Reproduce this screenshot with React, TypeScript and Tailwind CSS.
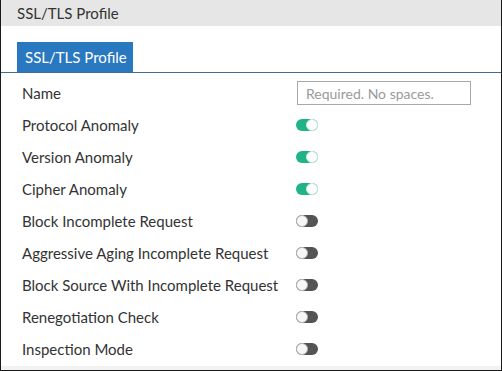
import React from "react";

const rows: { label: string; on: boolean }[] = [
  { label: "Protocol Anomaly", on: true },
  { label: "Version Anomaly", on: true },
  { label: "Cipher Anomaly", on: true },
  { label: "Block Incomplete Request", on: false },
  { label: "Aggressive Aging Incomplete Request", on: false },
  { label: "Block Source With Incomplete Request", on: false },
  { label: "Renegotiation Check", on: false },
  { label: "Inspection Mode", on: false },
];

function Toggle({ on }: { on: boolean }) {
  return on ? (
    <div className="relative w-[22px] h-[12px] rounded-full bg-[#1fb386]">
      <div className="absolute right-0 top-0 w-[12px] h-[12px] rounded-full bg-white border border-[#cfe9e0]" />
    </div>
  ) : (
    <div className="relative w-[22px] h-[12px] rounded-full bg-[#545454]">
      <div className="absolute left-0 top-0 w-[12px] h-[12px] rounded-full bg-[#f7f7f7] border border-[#b5b5b5]" />
    </div>
  );
}

export default function App() {
  return (
    <div
      className="w-[502px] h-[371px] border-x border-b border-[#1a1a1a] bg-white flex flex-col text-[#333] text-[15px]"
      style={{ fontFamily: "Lato, 'Open Sans', sans-serif" }}
    >
      <div className="h-[26px] bg-[#e6e6e6] pl-[16px] flex items-center">SSL/TLS Profile</div>
      <div className="pt-[16px] border-b border-[#3f6d95]">
        <div className="ml-[16px] w-[116px] h-[30px] bg-[#2a78bf] text-white flex items-center pl-[8px]">
          SSL/TLS Profile
        </div>
      </div>
      <div className="pt-[4px] pl-[21px] flex-1 flex flex-col">
        <div className="grid grid-cols-[274px_1fr] h-[32px] items-center">
          <div>Name</div>
          <input
            className="ml-[1px] w-[174px] h-[24px] border border-[#a9a9a9] px-[8px] text-[14px] placeholder:text-[#9a9a9a] outline-none"
            placeholder="Required. No spaces."
            style={{ fontFamily: "Lato, 'Open Sans', sans-serif" }}
          />
        </div>
        {rows.map((r) => (
          <div key={r.label} className="grid grid-cols-[274px_1fr] h-[32px] items-center">
            <div>{r.label}</div>
            <Toggle on={r.on} />
          </div>
        ))}
      </div>
      <div className="h-[4px] bg-[#f2f2f2]" />
    </div>
  );
}
